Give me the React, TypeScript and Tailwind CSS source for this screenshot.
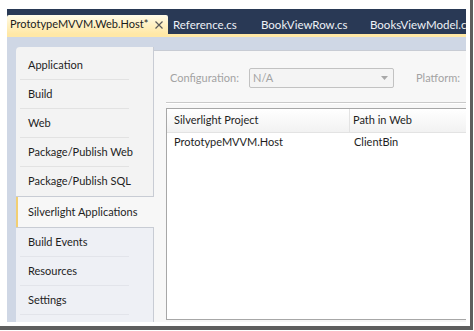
const font = { fontFamily: 'Lato, "Open Sans", sans-serif' }

const pages = [
  'Application',
  'Build',
  'Web',
  'Package/Publish Web',
  'Package/Publish SQL',
  'Silverlight Applications',
  'Build Events',
  'Resources',
  'Settings',
]
const selected = 5

function Tabs() {
  return (
    <div className="h-[25px] bg-[#293955] flex items-end overflow-hidden whitespace-nowrap text-[11.5px]">
      <div className="h-[19px] w-[161px] shrink-0 flex items-center pl-[3px] pr-[5px] bg-gradient-to-b from-[#fffbe8] via-[#fff1c4] to-[#ffe8a6] text-[#1b1b1b] rounded-t-[2px]">
        <span className="flex-1 text-[11px]">PrototypeMVVM.Web.Host*</span>
        <svg width="8" height="8" viewBox="0 0 8 8" className="mt-[1px] shrink-0">
          <path d="M0.5 0.5l7 7M7.5 0.5l-7 7" stroke="#5a5a5a" strokeWidth="1.2" />
        </svg>
      </div>
      <div className="h-[19px] flex items-center text-[#eef1f7]">
        <span className="ml-[5px] w-[88px] shrink-0">Reference.cs</span>
        <span className="w-[109px] shrink-0">BookViewRow.cs</span>
        <span className="shrink-0">BooksViewModel.cs</span>
      </div>
    </div>
  )
}

function Sidebar() {
  const above = pages.slice(0, selected)
  const below = pages.slice(selected + 1)
  return (
    <div className="w-[138px] shrink-0 flex flex-col text-[11px] text-[#1e1e1e]">
      <div className="bg-[#f3f3f3] rounded-tl-[4px] border-r border-b border-[#c8ccd4] pt-[4px]">
        {above.map((p, i) => (
          <div key={p} className="h-[29px] flex items-center pl-[12px] relative">
            {p}
            {i < above.length - 1 && (
              <div className="absolute left-[4px] right-[24px] bottom-0 h-px bg-[#e2e2e2]" />
            )}
          </div>
        ))}
      </div>
      <div className="h-[30px] flex items-center pl-[10px] bg-[#f7f7f7] border-l-2 border-[#f2cf72]">
        {pages[selected]}
      </div>
      <div className="flex-1 bg-[#eef0f5] border-r border-t border-[#c8ccd4]">
        {below.map((p) => (
          <div key={p} className="h-[29px] flex items-center pl-[12px] relative">
            {p}
            <div className="absolute left-[4px] right-[24px] bottom-0 h-px bg-[#e2e4ea]" />
          </div>
        ))}
      </div>
    </div>
  )
}

function Content() {
  return (
    <div className="flex-1 mt-[3px] bg-[#f7f7f7] border-t border-[#c8ccd4] overflow-hidden pl-[12px] text-[11px]">
      <div className="h-[20px] mt-[17px] flex items-center whitespace-nowrap text-[#a3a3a3]">
        <span className="ml-[4px] w-[79px] shrink-0">Configuration:</span>
        <div className="w-[145px] h-[20px] shrink-0 border border-[#c2c2c2] rounded-[2px] bg-[#f4f4f4] flex items-center pl-[3px] pr-[5px]">
          <span className="flex-1">N/A</span>
          <svg width="7" height="4" viewBox="0 0 7 4">
            <path d="M0 0h7L3.5 4z" fill="#a8a8a8" />
          </svg>
        </div>
        <span className="ml-[22px] shrink-0">Platform:</span>
      </div>
      <div className="mt-[14px] h-px bg-[#c9c9c9] border-b border-white box-content" />
      <div className="mt-[4px] w-[330px] h-[212px] bg-white border border-[#a7a7a7] text-[#1e1e1e]">
        <div className="h-[24px] flex items-center bg-gradient-to-b from-white to-[#f2f2f2] border-b border-[#e3e3e3] whitespace-nowrap">
          <span className="w-[183px] pl-[7px] border-r border-[#e3e3e3] h-full flex items-center">Silverlight Project</span>
          <span className="pl-[3px]">Path in Web</span>
        </div>
        <div className="h-[19px] flex items-center whitespace-nowrap">
          <span className="w-[184px] pl-[7px]">PrototypeMVVM.Host</span>
          <span className="pl-[3px]">ClientBin</span>
        </div>
      </div>
    </div>
  )
}

export default function App() {
  return (
    <div className="w-[474px] h-[331px] bg-white" style={font}>
      <div className="w-[473px] h-[330px] border-r-[3px] border-b-[4px] border-[#5e5e5e] pl-[7px] pt-[9px]">
        <div className="w-[459px] h-[313px] flex flex-col overflow-hidden">
          <Tabs />
          <div className="h-[3px] bg-[#ffe8a6]" />
          <div className="flex-1 bg-[#cfd7e5] flex pl-[9px] pt-[10px] min-h-0">
            <Sidebar />
            <Content />
          </div>
        </div>
      </div>
    </div>
  )
}
